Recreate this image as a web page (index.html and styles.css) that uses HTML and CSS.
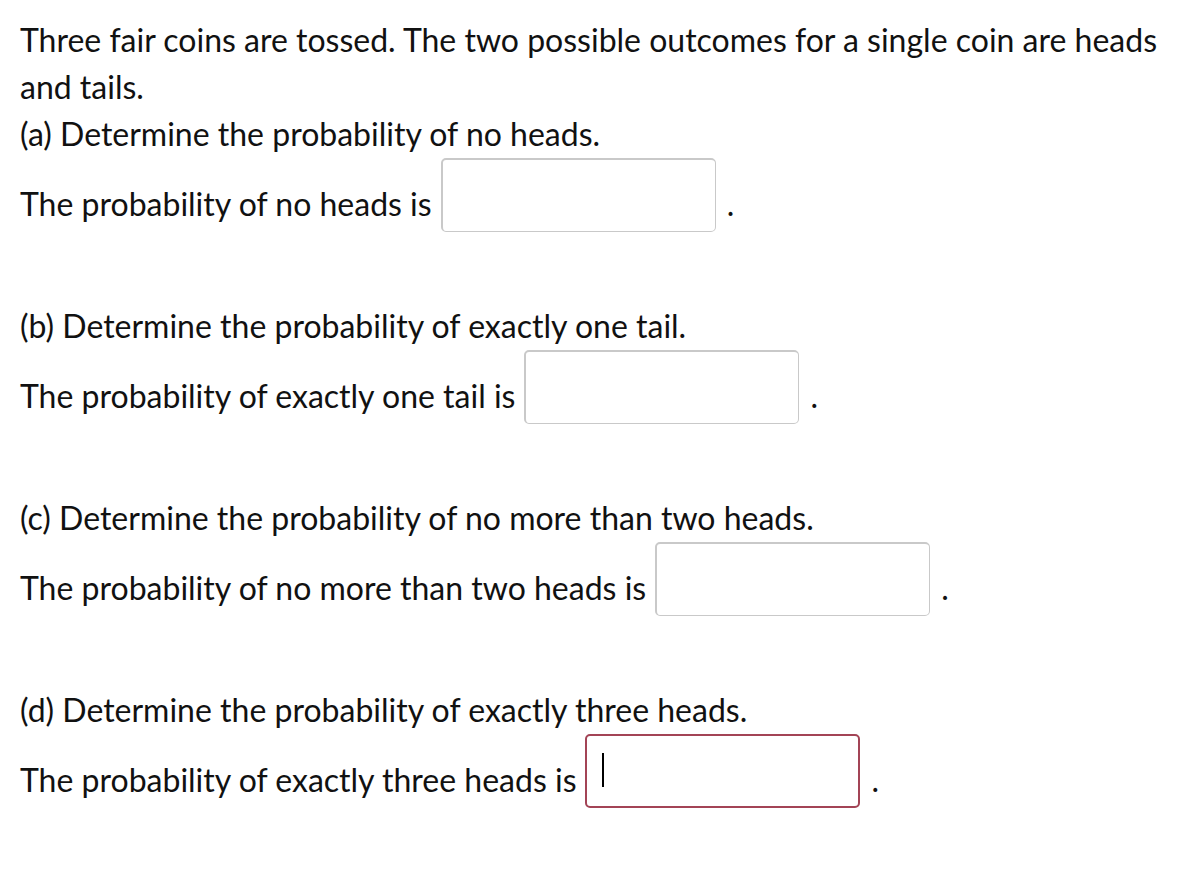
FILE: index.html
```html
<!DOCTYPE html>
<html>
<head>
<meta charset="utf-8">
<link rel="stylesheet" href="styles.css">
</head>
<body>
<div class="page">
  <p class="intro">Three fair coins are tossed. The two possible outcomes for a single coin are heads and tails.</p>
  <section class="part first">
    <p class="question">(a) Determine the probability of no heads.</p>
    <div class="answer"><span>The probability of no heads is</span><span class="box"></span><span class="dot">.</span></div>
  </section>
  <section class="part">
    <p class="question">(b) Determine the probability of exactly one tail.</p>
    <div class="answer"><span>The probability of exactly one tail is</span><span class="box"></span><span class="dot">.</span></div>
  </section>
  <section class="part">
    <p class="question">(c) Determine the probability of no more than two heads.</p>
    <div class="answer"><span>The probability of no more than two heads is</span><span class="box"></span><span class="dot">.</span></div>
  </section>
  <section class="part">
    <p class="question">(d) Determine the probability of exactly three heads.</p>
    <div class="answer"><span>The probability of exactly three heads is</span><span class="box focused"><span class="caret"></span></span><span class="dot">.</span></div>
  </section>
</div>
</body>
</html>
```

FILE: styles.css
```css
html, body {
  margin: 0;
  padding: 0;
  background: #ffffff;
}
body {
  font-family: Lato, "Liberation Sans", sans-serif;
  font-size: 32px;
  color: #111111;
}
.page {
  padding: 16px 20px 0 20px;
}
.intro {
  margin: 0;
  line-height: 47px;
}
.part {
  margin-top: 52px;
}
.part.first {
  margin-top: 0;
}
.question {
  margin: 0;
  line-height: 47px;
}
.answer {
  display: flex;
  align-items: center;
  line-height: 47px;
  margin-top: 0;
}
.box {
  display: block;
  box-sizing: border-box;
  width: 275px;
  height: 74px;
  margin: 1px 11px 18px 9px;
  border: 1px solid #c9c9c9;
  border-left-width: 2px;
  border-top-width: 2px;
  border-radius: 5px;
  background: #fff;
  position: relative;
}
.box.focused {
  border: 2px solid #a34456;
}
.caret {
  position: absolute;
  left: 15px;
  top: 17px;
  width: 2px;
  height: 34px;
  background: #000;
}
```
